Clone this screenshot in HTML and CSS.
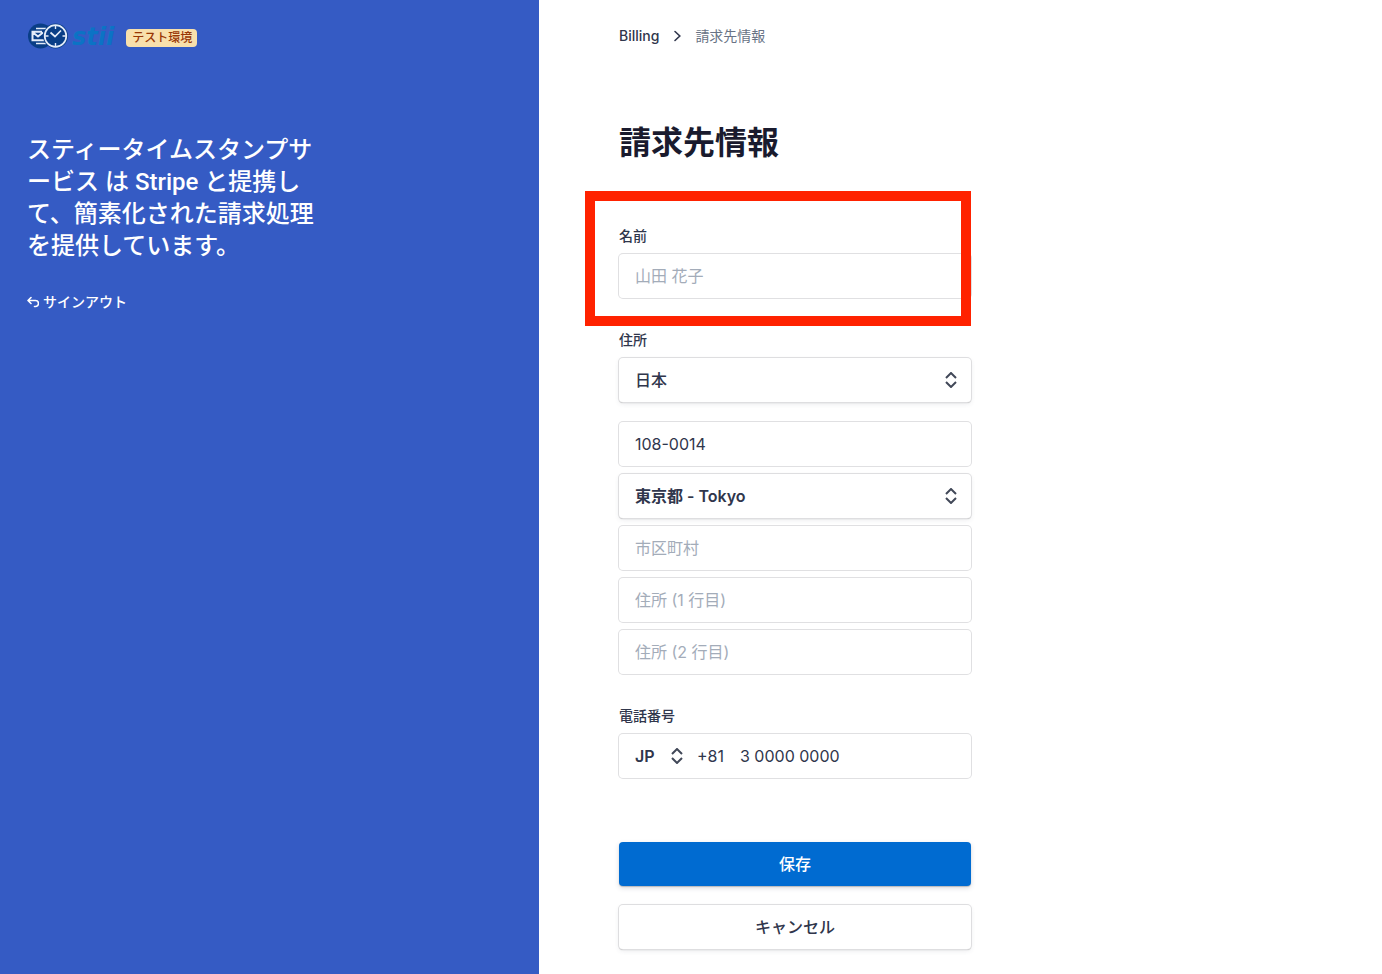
FILE: index.html
```html
<!DOCTYPE html>
<html lang="ja">
<head>
<meta charset="utf-8">
<meta name="viewport" content="width=device-width, initial-scale=1">
<title>請求先情報</title>
<link rel="stylesheet" href="styles.css">
</head>
<body>
<div class="layout">
  <aside class="sidebar">
    <header class="brand">
      <svg class="brand-mark" viewBox="0 0 40 26" aria-hidden="true">
        <circle cx="12.500" cy="13" r="12.500" fill="#093e86"/>
        <path d="M8 5.500H18M8 20.500H18" stroke="#e4ecf8" stroke-width="1.600" fill="none"/>
        <path d="M14 8.700H4.500V17.300H14M5 9.500L10 13.500L15 9.500M13 17.300H18" stroke="#e4ecf8" stroke-width="2" fill="none"/>
        <circle cx="27.500" cy="13" r="12.500" fill="#093e86"/>
        <circle cx="27.500" cy="13" r="10.800" fill="none" stroke="#e4ecf8" stroke-width="1.700"/>
        <path d="M27.500 2.500V6M27.500 20V23.500M17 13H20.500M34.500 13H38" stroke="#e4ecf8" stroke-width="1.400"/>
        <path d="M22.500 9.500L27 13.500L33 7.500" stroke="#e4ecf8" stroke-width="1.700" fill="none"/>
      </svg>
      <span class="brand-name">stii</span>
      <span class="badge">テスト環境</span>
    </header>
    <p class="intro">スティータイムスタンプサービス は Stripe と提携して、簡素化された請求処理を提供しています。</p>
    <a class="signout" href="#">
      <svg class="signout-icon" viewBox="0 0 12 12" aria-hidden="true"><path d="M4 1.500L1 4.500L4 7.500M1.500 4.500H8.500A2.800 2.800 0 0 1 8.500 10.500H7.500" fill="none" stroke="currentColor" stroke-width="1.600" stroke-linecap="round" stroke-linejoin="round"/></svg>
      サインアウト
    </a>
  </aside>
  <main class="main">
    <nav class="crumbs" aria-label="Breadcrumb">
      <a class="crumb-link" href="#">Billing</a>
      <svg class="crumb-arrow" viewBox="0 0 8 12" aria-hidden="true"><path d="M2 1.500L6.800 6L2 10.500" fill="none" stroke="currentColor" stroke-width="1.600" stroke-linecap="round"/></svg>
      <span class="crumb-current">請求先情報</span>
    </nav>
    <h1 class="title">請求先情報</h1>
    <form class="form">
      <div class="group group-name">
        <label class="label" for="name">名前</label>
        <input class="field" id="name" type="text" placeholder="山田 花子">
        <div class="highlight"></div>
      </div>
      <div class="group group-address">
        <label class="label" for="country">住所</label>
        <div class="select-wrap country">
          <select class="field select" id="country"><option>日本</option></select>
          <svg class="chevrons" viewBox="0 0 12 16" aria-hidden="true"><path d="M1 6L6 1L11 6M1 10L6 15L11 10"/></svg>
        </div>
        <div class="stack">
          <input class="field" type="text" value="108-0014" aria-label="郵便番号">
          <div class="select-wrap">
            <select class="field select select-strong" aria-label="都道府県"><option>東京都 - Tokyo</option></select>
            <svg class="chevrons" viewBox="0 0 12 16" aria-hidden="true"><path d="M1 6L6 1L11 6M1 10L6 15L11 10"/></svg>
          </div>
          <input class="field" type="text" placeholder="市区町村" aria-label="市区町村">
          <input class="field" type="text" placeholder="住所 (1 行目)" aria-label="住所 (1 行目)">
          <input class="field" type="text" placeholder="住所 (2 行目)" aria-label="住所 (2 行目)">
        </div>
      </div>
      <div class="group group-phone">
        <label class="label" for="phone">電話番号</label>
        <div class="field phone">
          <div class="select-wrap phone-country">
            <select class="phone-select" aria-label="国番号"><option>JP</option></select>
            <svg class="chevrons chevrons-end" viewBox="0 0 12 16" aria-hidden="true"><path d="M1 6L6 1L11 6M1 10L6 15L11 10"/></svg>
          </div>
          <span class="phone-code">+81</span>
          <input class="phone-input" id="phone" type="tel" value="3 0000 0000">
        </div>
      </div>
      <div class="actions">
        <button class="button button-primary" type="submit">保存</button>
        <button class="button button-plain" type="button">キャンセル</button>
      </div>
    </form>
  </main>
</div>
</body>
</html>
```
FILE: styles.css
```css
* { box-sizing: border-box; }

body {
  margin: 0;
  background: #fff;
  color: #30364c;
  font-family: Inter, "Noto Sans CJK JP", sans-serif;
  font-size: 16px;
  line-height: 24px;
}

input, select, button { font: inherit; color: inherit; }
a { color: inherit; text-decoration: none; }

.layout {
  display: grid;
  grid-template-columns: 39% 1fr;
  min-height: 100vh;
}

.sidebar {
  padding: 22px 27px;
  background: #355bc4;
  color: #fff;
}

.brand { display: flex; align-items: center; height: 28px; }
.brand-mark { width: 40px; height: 26px; margin-left: 1px; }
.brand-name {
  margin: 2px 0 0 4px;
  color: #0b73c5;
  font: italic 700 24px/24px "DejaVu Sans", sans-serif;
}
.badge {
  margin: 4px 0 0 12px;
  padding: 0 5px 0 6px;
  border-radius: 4px;
  background: #f8e0ac;
  color: #983705;
  font-size: 12px;
  font-weight: 500;
  line-height: 18px;
}

.intro {
  max-width: 290px;
  margin: 84px 0 28px;
  font-family: Roboto, "Noto Sans CJK JP", sans-serif;
  font-size: 24px;
  font-weight: 500;
  line-height: 32px;
  line-break: loose;
}

.signout {
  display: inline-flex;
  align-items: center;
  gap: 4px;
  font-size: 14px;
  font-weight: 500;
  line-height: 20px;
}
.signout-icon { width: 12px; height: 12px; }

.main { padding: 26px 80px 24px; }

.crumbs {
  display: flex;
  align-items: center;
  font-size: 14px;
  line-height: 20px;
}
.crumb-link { font-weight: 500; }
.crumb-arrow { width: 8px; height: 12px; margin: 0 14px; }
.crumb-current { color: #687385; }

.title {
  margin: 77px 0 63px;
  color: #1a1b2e;
  font-size: 32px;
  font-weight: 700;
  line-height: 40px;
}

.form { max-width: 352px; }
.group { position: relative; display: flex; flex-direction: column; }
.group-name, .group-address { margin-bottom: 32px; }
.group-phone { margin-bottom: 64px; }
.label {
  margin-bottom: 8px;
  font-size: 14px;
  font-weight: 500;
  line-height: 20px;
}

.field {
  width: 100%;
  height: 44px;
  padding: 0 16px;
  border: 0;
  border-radius: 4px;
  background: #fff;
  box-shadow: 0 0 0 1px #e0e0e2;
}
.field::placeholder { color: #a3acb9; opacity: 1; }

.highlight {
  position: absolute;
  inset: -35px 0 -28px -34px;
  border: 10px solid #ff2200;
  pointer-events: none;
}

.select-wrap { position: relative; }
.country { margin-bottom: 20px; }
.select {
  display: block;
  appearance: none;
  font-weight: 500;
  box-shadow: 0 0 0 1px #dedee0, 0 1px 1px #00000050, 0 2px 5px #3c42571a;
}
.select-strong { font-weight: 600; }
.chevrons {
  position: absolute;
  top: 50%;
  right: 14px;
  width: 12px;
  height: 16px;
  margin-top: -8px;
  fill: none;
  stroke: #414858;
  stroke-width: 2px;
  pointer-events: none;
}
.chevrons-end { right: 0; }

.stack { display: grid; gap: 8px; }

.phone { display: flex; align-items: center; }
.phone-country { width: 48px; margin-right: 14px; }
.phone-select {
  display: block;
  width: 100%;
  padding: 0;
  border: 0;
  background: none;
  appearance: none;
  font-weight: 600;
}
.phone-input {
  flex: 1;
  min-width: 0;
  margin-left: 16px;
  padding: 0;
  border: 0;
  background: none;
}

.actions { display: grid; gap: 19px; }
.button {
  height: 44px;
  border: 0;
  border-radius: 4px;
  font-weight: 500;
}
.button-primary {
  background: #006bd1;
  color: #fff;
  box-shadow: 0 1px 1px #00000030, 0 2px 5px #3c425730;
}
.button-plain {
  background: #fff;
  box-shadow: 0 0 0 1px #dedee0, 0 1px 1px #00000050, 0 2px 5px #3c42571a;
}
```
